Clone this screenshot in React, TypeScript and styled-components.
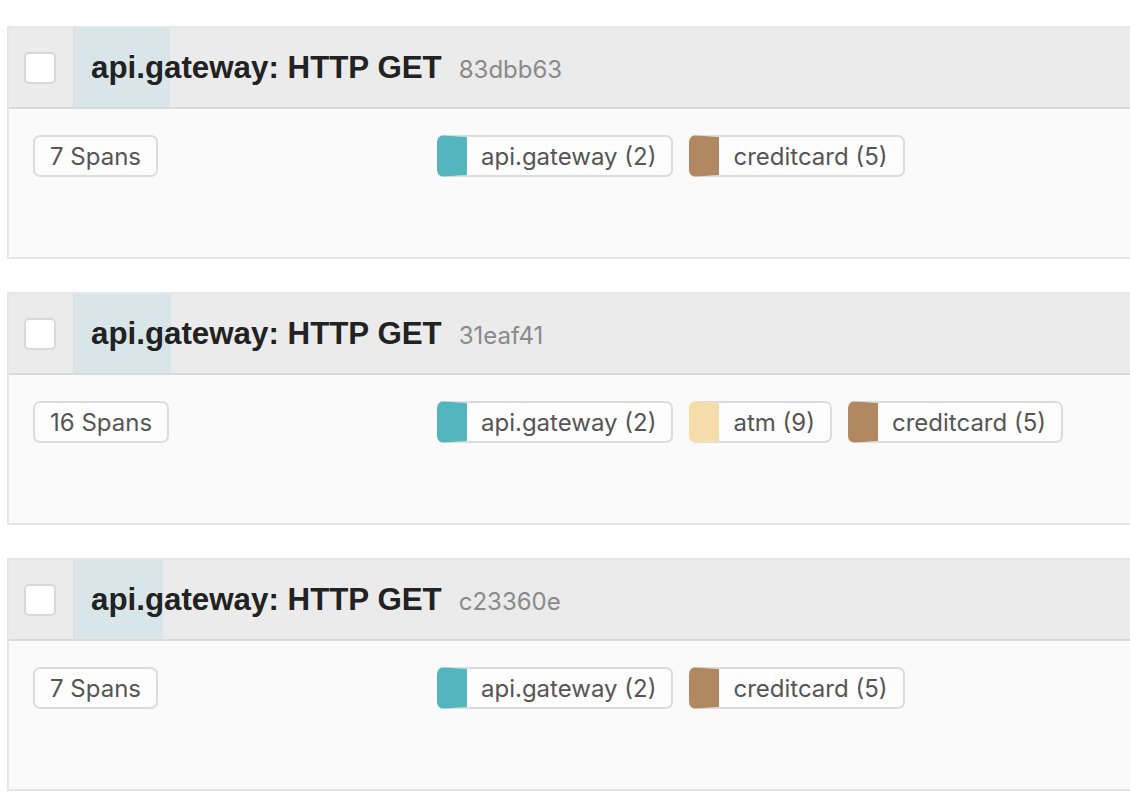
import React from "react";
import styled, { createGlobalStyle } from "styled-components";

const Global = createGlobalStyle`
  html, body { margin: 0; padding: 0; background: #fff; }
  body { overflow: hidden; font-family: Inter, "Noto Sans", sans-serif; }
`;

const List = styled.div`
  display: flex;
  flex-direction: column;
  gap: 33px;
  padding: 26px 0 0 7px;
  width: 1200px;
`;

const Card = styled.div`
  border: 2px solid #e6e6e6;
  background: #fafafa;
  display: flex;
  flex-direction: column;
`;

const Header = styled.div`
  display: flex;
  align-items: stretch;
  height: 79px;
  background: #ebebeb;
  border-bottom: 2px solid #dadada;
`;

const CheckCell = styled.div`
  width: 65px;
  display: flex;
  align-items: center;
  justify-content: center;
  border-right: 1px solid #dedede;
  box-sizing: border-box;
  padding-right: 2px;
`;

const Checkbox = styled.div`
  width: 28px;
  height: 28px;
  background: #fff;
  border: 2px solid #d9d9d9;
  border-radius: 5px;
`;

const TitleCell = styled.div`
  position: relative;
  flex: 1;
  display: flex;
  align-items: center;
  padding-left: 17px;
`;

const DurationBar = styled.div`
  position: absolute;
  left: 0;
  top: 0;
  bottom: 0;
  background: #d8e6ea;
`;

const Title = styled.span`
  position: relative;
  font-family: "Liberation Sans", Arial, sans-serif;
  font-weight: 700;
  font-size: 31.3px;
  color: #222;
`;

const TraceId = styled.span`
  position: relative;
  margin-left: 17px;
  font-family: Inter, sans-serif;
  font-size: 24px;
  color: #8a8a8a;
  padding-top: 4px;
`;

const Body = styled.div`
  height: 148px;
  display: flex;
  align-items: flex-start;
  padding: 26px 0 0 24px;
  box-sizing: border-box;
`;

const SpansCol = styled.div`
  width: 404px;
`;

const Tags = styled.div`
  display: flex;
  gap: 16px;
`;

const Tag = styled.div<{ $color?: string }>`
  height: 42px;
  box-sizing: border-box;
  display: inline-flex;
  align-items: center;
  border: 2px solid #dcdcdc;
  ${(p) => (p.$color ? `border-left: 30px solid ${p.$color};` : "")}
  border-radius: 7px;
  background: #fdfdfd;
  padding: 0 15px 0 ${(p) => (p.$color ? "14px" : "15px")};
  font-size: 24px;
  color: #555;
  white-space: nowrap;
`;

const colors: Record<string, string> = {
  "api.gateway": "#53b6be",
  atm: "#f5dca8",
  creditcard: "#b08963",
};

type Trace = {
  id: string;
  spans: number;
  bar: number;
  services: [string, number][];
};

const traces: Trace[] = [
  { id: "83dbb63", spans: 7, bar: 96, services: [["api.gateway", 2], ["creditcard", 5]] },
  { id: "31eaf41", spans: 16, bar: 97, services: [["api.gateway", 2], ["atm", 9], ["creditcard", 5]] },
  { id: "c23360e", spans: 7, bar: 89, services: [["api.gateway", 2], ["creditcard", 5]] },
];

export default function App() {
  return (
    <>
      <Global />
      <List>
        {traces.map((t) => (
          <Card key={t.id}>
            <Header>
              <CheckCell>
                <Checkbox />
              </CheckCell>
              <TitleCell>
                <DurationBar style={{ width: t.bar }} />
                <Title>api.gateway: HTTP GET</Title>
                <TraceId>{t.id}</TraceId>
              </TitleCell>
            </Header>
            <Body>
              <SpansCol>
                <Tag>{t.spans} Spans</Tag>
              </SpansCol>
              <Tags>
                {t.services.map(([name, n]) => (
                  <Tag key={name} $color={colors[name]}>
                    {name} ({n})
                  </Tag>
                ))}
              </Tags>
            </Body>
          </Card>
        ))}
      </List>
    </>
  );
}
